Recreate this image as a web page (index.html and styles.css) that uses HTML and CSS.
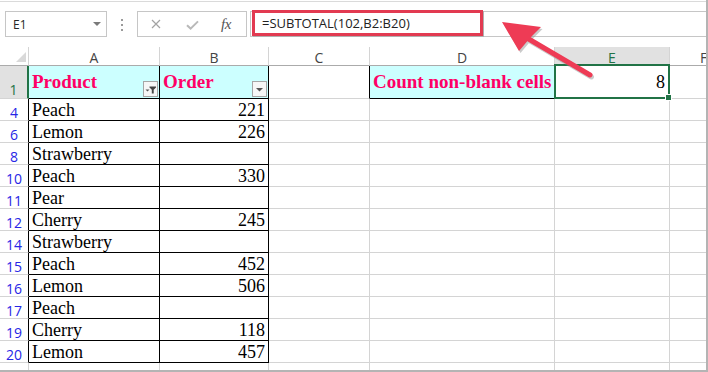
FILE: index.html
```html
<!DOCTYPE html>
<html lang="en">
<head>
  <meta charset="UTF-8">
  <title>SUBTOTAL count non-blank</title>
  <link rel="stylesheet" href="styles.css">
</head>
<body>
<div class="window">
  <div class="topline"></div>

  <div class="toolbar">
    <div class="namebox"><span>E1</span><i class="caret"></i></div>
    <div class="grip"><i></i><i></i><i></i></div>
    <div class="fxbox">
      <svg class="ico-x" width="10" height="10" viewBox="0 0 10 10"><path d="M1 1L9 9M9 1L1 9" stroke="#a3a3a3" stroke-width="1.2" fill="none"/></svg>
      <svg class="ico-ok" width="13" height="10" viewBox="0 0 13 10"><path d="M1 5.2L4.6 8.6L12 1.4" stroke="#b9b9b9" stroke-width="2" fill="none"/></svg>
      <span class="fx">fx</span>
    </div>
    <div class="formula">
      <div class="hl">=SUBTOTAL(102,B2:B20)</div>
    </div>
  </div>

  <div class="sheet">
    <div class="row hdr">
      <div class="corner"><svg width="28" height="18" viewBox="0 0 28 18"><polygon points="16,15 26,15 26,5" fill="#d9d9d9"/></svg></div>
      <div>A</div><div>B</div><div>C</div><div>D</div><div class="sel">E</div><div>F</div>
    </div>

    <div class="row r1">
      <div class="rh">1</div>
      <div class="t head fcell"><span>Product</span>
        <span class="fbtn"><svg width="13" height="14" viewBox="0 0 13 14"><polygon points="1.5,7.5 5.5,7.5 3.5,9.5" fill="#555"/><polygon points="5.5,4.5 12,4.5 12,5.5 9.7,7.8 9.7,11.5 7.8,11.5 7.8,7.8 5.5,5.5" fill="#444"/></svg></span>
      </div>
      <div class="t head fcell"><span>Order</span>
        <span class="fbtn"><svg width="13" height="14" viewBox="0 0 13 14"><polygon points="3,6 10,6 6.5,9.5" fill="#555"/></svg></span>
      </div>
      <div class="before-d"></div>
      <div class="head dcell">Count non-blank cells</div>
      <div class="num active">8</div>
      <div></div>
    </div>

    <div class="row r"><div class="rh">4</div><div class="t">Peach</div><div class="t num">221</div><div></div><div></div><div></div><div></div></div>
    <div class="row r"><div class="rh">6</div><div class="t">Lemon</div><div class="t num">226</div><div></div><div></div><div></div><div></div></div>
    <div class="row r"><div class="rh">8</div><div class="t">Strawberry</div><div class="t num"></div><div></div><div></div><div></div><div></div></div>
    <div class="row r"><div class="rh">10</div><div class="t">Peach</div><div class="t num">330</div><div></div><div></div><div></div><div></div></div>
    <div class="row r"><div class="rh">11</div><div class="t">Pear</div><div class="t num"></div><div></div><div></div><div></div><div></div></div>
    <div class="row r"><div class="rh">12</div><div class="t">Cherry</div><div class="t num">245</div><div></div><div></div><div></div><div></div></div>
    <div class="row r"><div class="rh">14</div><div class="t">Strawberry</div><div class="t num"></div><div></div><div></div><div></div><div></div></div>
    <div class="row r"><div class="rh">15</div><div class="t">Peach</div><div class="t num">452</div><div></div><div></div><div></div><div></div></div>
    <div class="row r"><div class="rh">16</div><div class="t">Lemon</div><div class="t num">506</div><div></div><div></div><div></div><div></div></div>
    <div class="row r"><div class="rh">17</div><div class="t">Peach</div><div class="t num"></div><div></div><div></div><div></div><div></div></div>
    <div class="row r"><div class="rh">19</div><div class="t">Cherry</div><div class="t num">118</div><div></div><div></div><div></div><div></div></div>
    <div class="row r"><div class="rh">20</div><div class="t">Lemon</div><div class="t num">457</div><div></div><div></div><div></div><div></div></div>

    <div class="row tail"><div class="rh"></div><div></div><div></div><div></div><div></div><div></div><div></div></div>
  </div>

  <!-- callout arrow pointing at the formula -->
  <svg class="arrow" width="708" height="372" viewBox="0 0 708 372">
    <g transform="translate(1.5 2)" fill="#8c8c8c" stroke="#8c8c8c" opacity="0.45">
      <line x1="590" y1="75" x2="527" y2="38" stroke-width="5" stroke-linecap="round"/>
      <polygon points="502,22 541,27 530,38 519,51" stroke="none"/>
    </g>
    <line x1="590" y1="75" x2="527" y2="38" stroke="#ee3b55" stroke-width="5" stroke-linecap="round"/>
    <polygon points="502,22 541,27 530,38 519,51" fill="#ee3b55"/>
  </svg>
</div>
</body>
</html>
```

FILE: styles.css
```css
body {
  margin: 0;
  font-family: "Open Sans", "Noto Sans", sans-serif;
  background-color: #fff;
}

.window {
  position: relative;
  width: 708px;
  height: 372px;
  box-sizing: border-box;
  border-right: 2px solid #b4b4b4;
  border-bottom: 2px solid #b4b4b4;
  background-color: #fff;
  overflow: hidden;
}

.topline {
  height: 2px;
  box-sizing: border-box;
  border-bottom: 1px solid #dadada;
}

/* formula bar */
.toolbar {
  display: flex;
  align-items: flex-start;
  height: 45px;
  padding-top: 9px;
  box-sizing: border-box;
}

.namebox {
  margin-left: 5px;
  width: 102px;
  height: 26px;
  box-sizing: border-box;
  border: 1px solid #c6c6c6;
  display: flex;
  align-items: center;
  justify-content: space-between;
  padding: 0 5px 0 7px;
  font-size: 12px;
  color: #262626;
}

.caret {
  width: 0;
  height: 0;
  border-left: 4px solid transparent;
  border-right: 4px solid transparent;
  border-top: 4px solid #7a7a7a;
}

.grip {
  margin-left: 14px;
  padding-top: 8px;
  display: flex;
  flex-direction: column;
  gap: 3px;
}

.grip i {
  width: 2px;
  height: 2px;
  background-color: #9a9a9a;
}

.fxbox {
  margin-left: 14px;
  width: 110px;
  height: 26px;
  box-sizing: border-box;
  border: 1px solid #c6c6c6;
  display: flex;
  align-items: center;
}

.ico-x {
  margin-left: 13px;
}

.ico-ok {
  margin-left: 25px;
  margin-top: 2px;
}

.fx {
  margin-left: 22px;
  font: italic 15px "Liberation Serif", serif;
  color: #555;
  letter-spacing: -0.5px;
}

.formula {
  margin-left: 3px;
  flex: 1;
  height: 26px;
  box-sizing: border-box;
  border: 1px solid #c6c6c6;
  border-right: none;
}

.hl {
  margin: -2px 0 0 1px;
  width: 231px;
  height: 26px;
  box-sizing: border-box;
  border: 3px solid #e23a51;
  box-shadow: 1px 1px 0 #b0b0b0;
  padding: 1px 0 0 7px;
  font-size: 13px;
  line-height: 19px;
  color: #222;
  white-space: nowrap;
}

/* grid */
.row {
  display: grid;
  grid-template-columns: 29px 131px 109px 101px 185px 115px 68px;
}

.row > div {
  box-sizing: border-box;
  border-right: 1px solid #d4d4d4;
  border-bottom: 1px solid #d4d4d4;
  display: flex;
  align-items: flex-end;
  padding: 0 3px 1px;
  font: 18px/18px "Liberation Serif", serif;
  color: #000;
  white-space: nowrap;
  overflow: hidden;
}

.hdr {
  height: 19px;
}

.hdr > div {
  justify-content: center;
  padding: 0;
  font: 14px/14px "Open Sans", sans-serif;
  color: #444;
  border-bottom-color: #ababab;
}

.hdr > .corner {
  align-items: flex-start;
  justify-content: flex-start;
}

.hdr > .sel {
  background-color: #e1e1e1;
  color: #217346;
  border-bottom-color: #217346;
}

.r1 {
  height: 33px;
}

.r {
  height: 22px;
}

.tail {
  height: 7px;
}

.tail > div {
  border-bottom: none;
}

.row > .rh {
  justify-content: center;
  padding: 0;
  font: 14px/14px "Open Sans", sans-serif;
  color: #2626e6;
}

.r > .rh {
  border-right-color: #000;
}

.r1 > div {
  align-items: center;
}

.r1 > .rh {
  align-items: flex-end;
  padding-bottom: 1px;
  background-color: #e1e1e1;
  color: #217346;
  border-right: 2px solid #217346;
}

.row > .t {
  border-right-color: #000;
  border-bottom-color: #000;
}

.row > .num {
  justify-content: flex-end;
}

.row > .head {
  background-color: #ccffff;
  color: #ff0066;
  font-weight: bold;
  font-size: 19px;
  line-height: 19px;
}

.row > .fcell {
  justify-content: space-between;
  padding-right: 1px;
}

.fbtn {
  align-self: flex-end;
  width: 15px;
  height: 16px;
  box-sizing: border-box;
  border: 1px solid #a6a6a6;
  background-color: #f6f6f6;
  display: flex;
}

.row > .before-d {
  border-right-color: #000;
}

.row > .dcell {
  border-bottom-color: #000;
  border-right-color: #000;
}

.row > .active {
  position: relative;
  overflow: visible;
  padding-right: 4px;
}

.active::before {
  content: "";
  position: absolute;
  left: -1px;
  top: -2px;
  right: -1px;
  bottom: -1px;
  border: 2px solid #217346;
}

.active::after {
  content: "";
  position: absolute;
  right: -3px;
  bottom: -3px;
  width: 5px;
  height: 5px;
  background-color: #217346;
  border: 1px solid #fff;
}

.arrow {
  position: absolute;
  left: 0;
  top: 0;
  pointer-events: none;
}
```
